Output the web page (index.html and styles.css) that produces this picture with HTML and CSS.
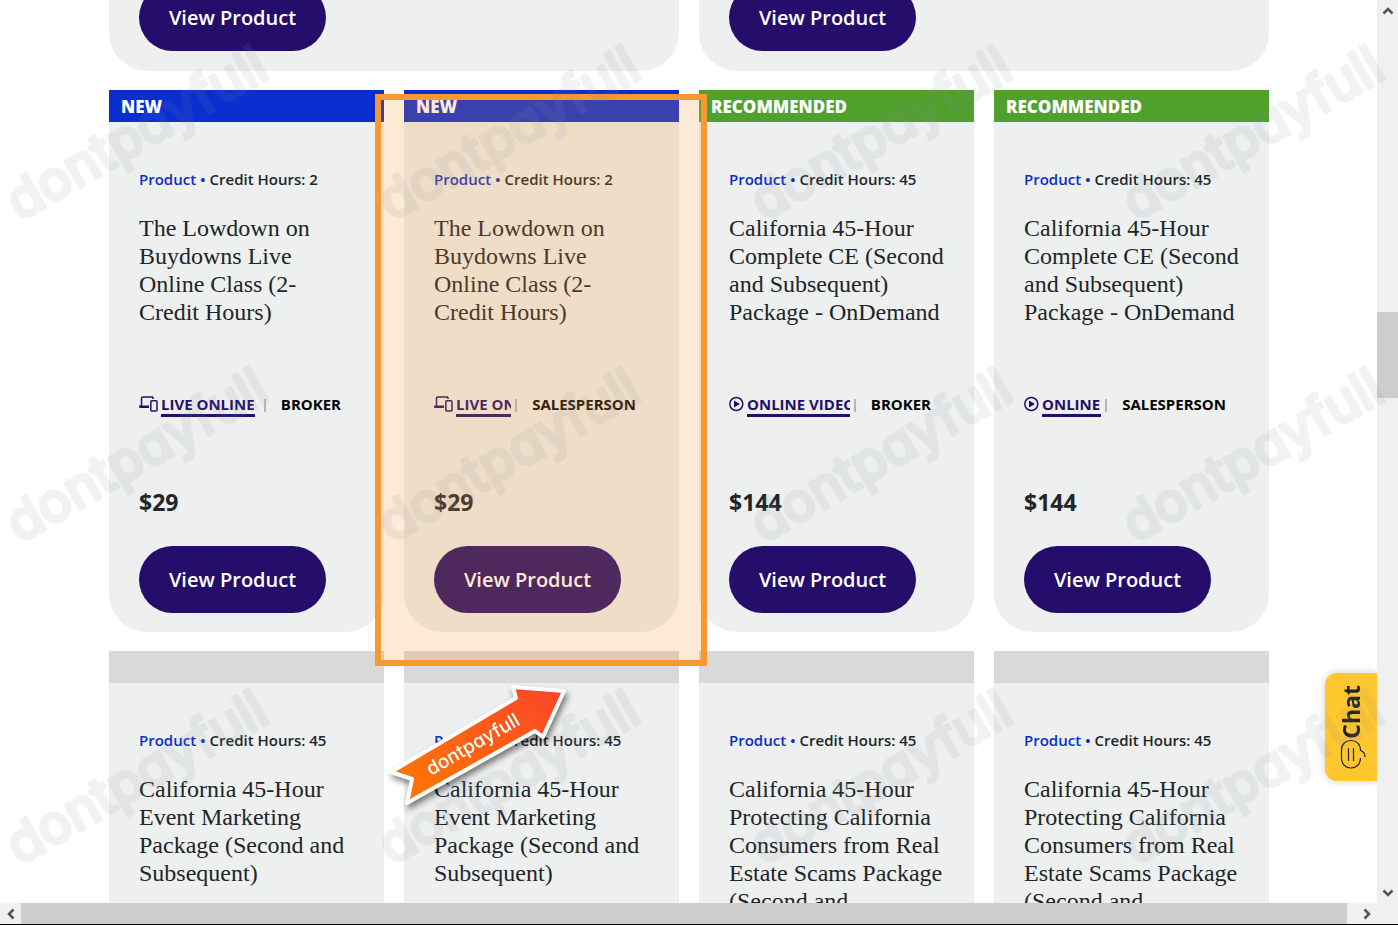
FILE: index.html
```html
<!DOCTYPE html>
<html lang="en">
<head>
  <meta charset="utf-8">
  <title>Continuing Education Packages</title>
  <link rel="stylesheet" href="styles.css">
</head>
<body>
<!-- Shared icons -->
<svg class="sprite" aria-hidden="true">
  <symbol id="icon-devices" viewBox="0 0 19 16">
    <path d="M2.5 10V2.2Q2.5 1 3.7 1H14" fill="none" stroke="currentColor" stroke-width="1.5"/>
    <path d="M14 1V3" stroke="currentColor" stroke-width="1.5"/>
    <path d="M0 9.5H10V12H1.5Q0 12 0 10.5Z" fill="currentColor"/>
    <rect x="11.8" y="4.8" width="6.2" height="10.2" rx="1" fill="none" stroke="currentColor" stroke-width="1.5"/>
  </symbol>
  <symbol id="icon-play" viewBox="0 0 15 16">
    <circle cx="7.3" cy="8" r="6.5" fill="none" stroke="currentColor" stroke-width="1.5"/>
    <path d="M5 4.5L11 8L5 11.5Z" fill="currentColor"/>
  </symbol>
  <symbol id="icon-chevron" viewBox="0 0 12 12">
    <path d="M1.5 8.5L6 4L10.5 8.5" fill="none" stroke="#555" stroke-width="2.5"/>
  </symbol>
</svg>

<div class="window">
  <main class="page">
    <div class="row wide">
      <article class="card"><button class="view-button">View Product</button></article>
      <article class="card"><button class="view-button">View Product</button></article>
    </div>

    <div class="row">
      <article class="card">
        <div class="banner new">NEW</div>
        <div class="card-body">
          <p class="meta"><a href="#">Product •</a> Credit Hours: 2</p>
          <h2 class="title">The Lowdown on<br>Buydowns Live<br>Online Class (2-<br>Credit Hours)</h2>
          <div class="info">
            <a class="media" href="#"><svg class="devices"><use href="#icon-devices"/></svg><span class="label">LIVE ONLINE</span></a>
            <span class="role">BROKER</span>
          </div>
          <p class="price">$29</p>
          <button class="view-button">View Product</button>
        </div>
      </article>

      <article class="card">
        <div class="banner new">NEW</div>
        <div class="card-body">
          <p class="meta"><a href="#">Product •</a> Credit Hours: 2</p>
          <h2 class="title">The Lowdown on<br>Buydowns Live<br>Online Class (2-<br>Credit Hours)</h2>
          <div class="info">
            <a class="media" href="#"><svg class="devices"><use href="#icon-devices"/></svg><span class="label">LIVE ONLINE</span></a>
            <span class="role">SALESPERSON</span>
          </div>
          <p class="price">$29</p>
          <button class="view-button">View Product</button>
        </div>
        <div class="highlight"></div>
      </article>

      <article class="card">
        <div class="banner recommended">RECOMMENDED</div>
        <div class="card-body">
          <p class="meta"><a href="#">Product •</a> Credit Hours: 45</p>
          <h2 class="title">California 45-Hour<br>Complete CE (Second<br>and Subsequent)<br>Package - OnDemand</h2>
          <div class="info">
            <a class="media" href="#"><svg class="play"><use href="#icon-play"/></svg><span class="label">ONLINE VIDEO</span></a>
            <span class="role">BROKER</span>
          </div>
          <p class="price">$144</p>
          <button class="view-button">View Product</button>
        </div>
      </article>

      <article class="card">
        <div class="banner recommended">RECOMMENDED</div>
        <div class="card-body">
          <p class="meta"><a href="#">Product •</a> Credit Hours: 45</p>
          <h2 class="title">California 45-Hour<br>Complete CE (Second<br>and Subsequent)<br>Package - OnDemand</h2>
          <div class="info">
            <a class="media" href="#"><svg class="play"><use href="#icon-play"/></svg><span class="label">ONLINE VIDEO</span></a>
            <span class="role">SALESPERSON</span>
          </div>
          <p class="price">$144</p>
          <button class="view-button">View Product</button>
        </div>
      </article>
    </div>

    <div class="row">
      <article class="card">
        <div class="banner"></div>
        <div class="card-body">
          <p class="meta"><a href="#">Product •</a> Credit Hours: 45</p>
          <h2 class="title">California 45-Hour<br>Event Marketing<br>Package (Second and<br>Subsequent)</h2>
        </div>
      </article>
      <article class="card">
        <div class="banner"></div>
        <div class="card-body">
          <p class="meta"><a href="#">Product •</a> Credit Hours: 45</p>
          <h2 class="title">California 45-Hour<br>Event Marketing<br>Package (Second and<br>Subsequent)</h2>
        </div>
        <!-- Arrow pointing at the highlighted card -->
        <svg class="arrow" viewBox="380 680 200 135">
          <defs>
            <linearGradient id="arrowFill" x1="0" y1="1" x2="1" y2="0">
              <stop offset="0" stop-color="#ff7b00"/>
              <stop offset="1" stop-color="#fa4529"/>
            </linearGradient>
          </defs>
          <path d="M391 772L516 698L513 687L564 691L543 737L535 731L407 803L412 779Z" fill="url(#arrowFill)" stroke="#fff" stroke-width="4" stroke-linejoin="round"/>
          <text class="arrow-text" transform="translate(431 776) rotate(-30)">dontpayfull</text>
        </svg>
      </article>
      <article class="card">
        <div class="banner"></div>
        <div class="card-body">
          <p class="meta"><a href="#">Product •</a> Credit Hours: 45</p>
          <h2 class="title">California 45-Hour<br>Protecting California<br>Consumers from Real<br>Estate Scams Package<br>(Second and</h2>
        </div>
      </article>
      <article class="card">
        <div class="banner"></div>
        <div class="card-body">
          <p class="meta"><a href="#">Product •</a> Credit Hours: 45</p>
          <h2 class="title">California 45-Hour<br>Protecting California<br>Consumers from Real<br>Estate Scams Package<br>(Second and</h2>
        </div>
      </article>
    </div>
  </main>

  <button class="chat">
    <svg viewBox="0 0 26 30" width="26" height="30">
      <path d="M20.500 19C20.500 25 16.500 29 11 29C5.500 29 1.500 25 1.500 19V11C1.500 5 5.500 1.500 11 1.500C16.500 1.500 20.500 5 20.500 11.500C23.500 12.500 25 15 25 18" fill="none" stroke="#222" stroke-width="1.200"/>
      <path d="M8.500 9V22M13.500 9V22" stroke="#222" stroke-width="1.200"/>
    </svg>
    <span>Chat</span>
  </button>

  <div class="scroll vertical">
    <button aria-label="Scroll up"><svg class="up"><use href="#icon-chevron"/></svg></button>
    <div class="thumb"></div>
    <button aria-label="Scroll down"><svg class="down"><use href="#icon-chevron"/></svg></button>
  </div>
</div>

<div class="scroll horizontal">
  <button aria-label="Scroll left"><svg class="left"><use href="#icon-chevron"/></svg></button>
  <div class="thumb"></div>
  <button aria-label="Scroll right"><svg class="right"><use href="#icon-chevron"/></svg></button>
</div>

<!-- Watermark tiles -->
<svg class="watermark">
  <g>
    <text transform="translate(20 222) rotate(-30)">dontpayfull</text>
    <text transform="translate(392 222) rotate(-30)">dontpayfull</text>
    <text transform="translate(764 222) rotate(-30)">dontpayfull</text>
    <text transform="translate(1136 222) rotate(-30)">dontpayfull</text>
    <text transform="translate(20 544) rotate(-30)">dontpayfull</text>
    <text transform="translate(392 544) rotate(-30)">dontpayfull</text>
    <text transform="translate(764 544) rotate(-30)">dontpayfull</text>
    <text transform="translate(1136 544) rotate(-30)">dontpayfull</text>
    <text transform="translate(20 866) rotate(-30)">dontpayfull</text>
    <text transform="translate(392 866) rotate(-30)">dontpayfull</text>
    <text transform="translate(764 866) rotate(-30)">dontpayfull</text>
    <text transform="translate(1136 866) rotate(-30)">dontpayfull</text>
  </g>
</svg>
</body>
</html>
```

FILE: styles.css
```css
* {
  box-sizing: border-box;
}

body {
  margin: 0;
  height: 100vh;
  display: flex;
  flex-direction: column;
  overflow: hidden;
  background-color: #fff;
  border-bottom: 1px solid #000;
  color: #212529;
  font-family: "Open Sans", "Noto Sans", sans-serif;
}

button {
  border: none;
  padding: 0;
  font-family: inherit;
  cursor: pointer;
}

a {
  color: #0a2ecb;
  text-decoration: none;
}

.sprite {
  position: absolute;
  width: 0;
  height: 0;
}

/* Visible part of the page with its scrollbar */
.window {
  position: relative;
  display: flex;
  flex: 1;
  min-height: 0;
  overflow: hidden;
}

.page {
  flex: 1;
  display: flex;
  flex-direction: column;
  gap: 19px;
  min-width: 0;
  margin-top: -16px; /* page is scrolled part way down */
  padding: 0 108px 0 109px;
}

/* Product cards */
.row {
  display: grid;
  grid-template-columns: repeat(4, minmax(0, 1fr));
  gap: 20px;
}

.row.wide {
  grid-template-columns: repeat(2, minmax(0, 1fr));
}

.card {
  position: relative;
  background-color: #edf0ef;
  border-radius: 0 0 38px 38px;
}

.wide .card {
  padding: 0 30px 20px;
}

.banner {
  height: 32px;
  padding-left: 12px;
  background-color: #d9d9d8;
  color: #fff;
  font-size: 17px;
  font-weight: 800;
  line-height: 34px;
}

.banner.new {
  background-color: #0a2ecf;
}

.banner.recommended {
  background-color: #50a02d;
}

.card-body {
  padding: 47px 30px 19px;
}

.meta {
  margin: 0;
  font-size: 15px;
  font-weight: 600;
  line-height: 20px;
}

.title {
  min-height: 140px;
  margin: 25px 0 40px;
  font-family: "Liberation Serif", serif;
  font-size: 24px;
  font-weight: 400;
  line-height: 28px;
  white-space: nowrap;
}

.info {
  display: flex;
  height: 22px;
  padding-right: 13px;
  font-size: 15px;
  font-weight: 700;
  line-height: 20px;
}

.media {
  display: flex;
  flex: 1;
  gap: 3px;
  min-width: 0;
  margin-right: 4px;
  color: #250e6b;
}

.media svg {
  flex: none;
  height: 16px;
  margin-top: 2px;
}

.devices {
  width: 19px;
}

.play {
  width: 15px;
}

.label {
  height: 23px;
  border-bottom: 3px solid #250e6b;
  overflow: hidden;
  white-space: nowrap;
}

.role {
  position: relative;
  padding-left: 17px;
  color: #000;
}

/* Thin divider before the licence type */
.role::before {
  content: "";
  position: absolute;
  left: 0;
  top: 5px;
  width: 2px;
  height: 13px;
  background-color: #b5b5b5;
}

.price {
  margin: 71px 0 29px;
  font-size: 23px;
  font-weight: 700;
  line-height: 30px;
}

.view-button {
  display: block;
  width: 187px;
  height: 67px;
  border-radius: 34px;
  background-color: #250e6b;
  color: #fff;
  font-size: 20px;
  font-weight: 600;
}

.highlight {
  position: absolute;
  z-index: 1;
  top: 4px;
  right: -28px;
  bottom: -34px;
  left: -29px;
  border: 6px solid #f89830;
  background-color: rgba(250, 143, 47, 0.2);
  background-clip: padding-box;
}

.arrow {
  position: absolute;
  z-index: 2;
  top: 29px;
  left: -24px;
  width: 200px;
  height: 135px;
  filter: drop-shadow(2px 4px 3px rgba(0, 0, 0, 0.5));
}

.arrow-text {
  fill: #fff;
  font-family: Inter, sans-serif;
  font-feature-settings: "cv11";
  font-size: 19px;
  font-weight: 500;
}

/* Chat tab on the right edge */
.chat {
  position: absolute;
  right: 21px;
  bottom: 122px;
  display: flex;
  flex-direction: column-reverse;
  align-items: center;
  justify-content: center;
  width: 52px;
  height: 108px;
  padding-left: 4px;
  border-radius: 12px 0 0 12px;
  background-color: #ffc72e;
  box-shadow: 0 0 8px rgba(0, 0, 0, 0.2);
  color: #222;
  font-size: 23px;
  font-weight: 700;
}

.chat span {
  line-height: 34px;
  margin-right: 4px;
  writing-mode: vertical-rl;
  transform: rotate(180deg);
}

/* Scrollbars */
.scroll {
  display: flex;
  flex: none;
  background-color: #f0f0f0;
}

.scroll button {
  display: flex;
  align-items: center;
  justify-content: center;
  width: 21px;
  height: 21px;
  background: none;
}

.scroll svg {
  width: 12px;
  height: 12px;
}

.thumb {
  background-color: #cdcdcd;
}

.vertical {
  z-index: 2;
  flex-direction: column;
  justify-content: space-between;
  width: 21px;
}

.vertical .thumb {
  height: 86px;
  margin-bottom: 194px;
}

.horizontal {
  height: 21px;
}

.horizontal .thumb {
  flex: 1;
}

.horizontal button:last-child {
  width: 30px;
  margin-right: 21px;
  padding-left: 10px;
}

.down {
  transform: rotate(180deg);
}

.left {
  transform: rotate(-90deg);
}

.right {
  transform: rotate(90deg);
}

.watermark {
  position: absolute;
  z-index: 3;
  top: 0;
  left: 0;
  width: 100%;
  height: 100%;
  pointer-events: none;
}

.watermark g {
  opacity: 0.12;
  fill: #8090a0;
  stroke: #8090a0;
  stroke-width: 4px;
  stroke-linejoin: round;
  font-family: Inter, sans-serif;
  font-feature-settings: "cv11";
  font-size: 54px;
}
```
